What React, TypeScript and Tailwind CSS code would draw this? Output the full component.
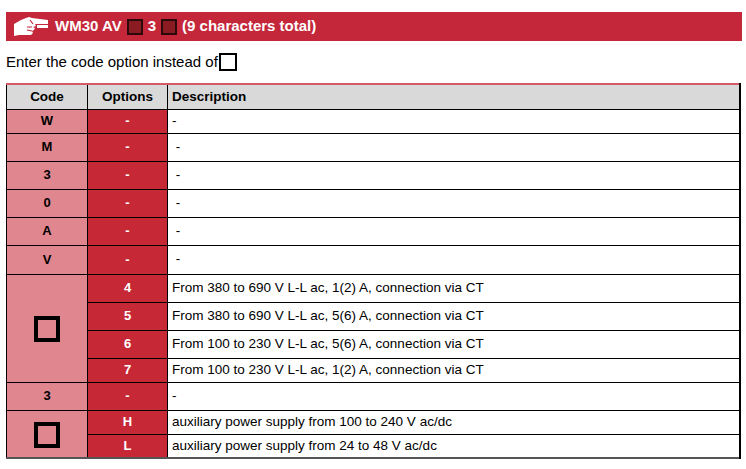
import React from 'react';

const font = { fontFamily: '"Liberation Sans", Arial, sans-serif' };

function Hand() {
  return (
    <svg width="38" height="22" viewBox="0 0 36 22" className="shrink-0">
      <path
        d="M1 8 L8 4 L13 2 L16 1 L19 2 L35 4 L35 8 L22 8 L23 10 L20 11 L22 12 L21 14 L19 15 L20 17 L18 19 L6 19 L1 20 Z"
        fill="#fff"
      />
      <path d="M17 4 L20 8 M19 11 L14 11 M19 15 L14 14" stroke="#c4263a" strokeWidth="1.2" fill="none" />
      <rect x="24" y="9" width="11" height="3" fill="#fff" />
    </svg>
  );
}

function SmallBox() {
  return <span className="inline-block w-[16px] h-[16px] bg-[#8a1b22] border-2 border-[#2a0a0a] align-middle" />;
}

function BigBox() {
  return <span className="inline-block w-[26px] h-[26px] border-[4px] border-black" />;
}

type Row = { code?: string; codeSpan?: number; box?: boolean; opt: string; desc: string; h: string };

const rows: Row[] = [
  { code: 'W', opt: '-', desc: '-', h: 'h-[24px]' },
  { code: 'M', opt: '-', desc: ' -', h: 'h-[28px]' },
  { code: '3', opt: '-', desc: ' -', h: 'h-[28px]' },
  { code: '0', opt: '-', desc: ' -', h: 'h-[28px]' },
  { code: 'A', opt: '-', desc: ' -', h: 'h-[28px]' },
  { code: 'V', opt: '-', desc: ' -', h: 'h-[29px]' },
  { box: true, codeSpan: 4, opt: '4', desc: 'From 380 to 690 V L-L ac, 1(2) A, connection via CT', h: 'h-[28px]' },
  { opt: '5', desc: 'From 380 to 690 V L-L ac, 5(6) A, connection via CT', h: 'h-[28px]' },
  { opt: '6', desc: 'From 100 to 230 V L-L ac, 5(6) A, connection via CT', h: 'h-[28px]' },
  { opt: '7', desc: 'From 100 to 230 V L-L ac, 1(2) A, connection via CT', h: 'h-[24px]' },
  { code: '3', opt: '-', desc: '-', h: 'h-[28px]' },
  { box: true, codeSpan: 2, opt: 'H', desc: 'auxiliary power supply from 100 to 240 V ac/dc', h: 'h-[24px]' },
  { opt: 'L', desc: 'auxiliary power supply from 24 to 48 V ac/dc', h: 'h-[24px]' },
];

export default function App() {
  return (
    <div className="w-[746px] h-[469px] bg-white pt-[12px] pl-[6px]" style={font}>
      <div className="w-[736px] h-[29px] bg-[#c4263a] flex items-center gap-[5px] pl-[6px] text-white font-bold text-[15px]">
        <Hand />
        <span>WM30 AV</span>
        <SmallBox />
        <span>3</span>
        <SmallBox />
        <span>(9 characters total)</span>
      </div>
      <div className="flex items-center mt-[10px] h-[22px] text-[15px] text-black">
        <span>Enter the code option instead of</span>
        <span className="inline-block w-[18px] h-[18px] border-2 border-black ml-[1px]" />
      </div>
      <table className="mt-[10px] w-[735px] border-collapse text-[13.5px] text-black border-b-2 border-b-[#555]">
        <thead>
          <tr className="h-[25px] bg-[#d9d9d9] font-bold">
            <th className="w-[81px] border border-black border-t-[#d55a68] border-t-2 text-center font-bold">Code</th>
            <th className="w-[80px] border border-black border-t-[#d55a68] border-t-2 text-center font-bold">Options</th>
            <th className="border border-black border-t-[#d55a68] border-t-2 border-r-2 text-left pl-[4px] font-bold">Description</th>
          </tr>
        </thead>
        <tbody>
          {rows.map((r, i) => (
            <tr key={i} className={r.h}>
              {r.code !== undefined && (
                <td className="bg-[#e0868f] border border-black text-center font-bold text-[13px]">{r.code}</td>
              )}
              {r.box && (
                <td rowSpan={r.codeSpan} className="bg-[#e0868f] border border-black text-center align-middle">
                  <div className="flex justify-center items-center pt-[2px]">
                    <BigBox />
                  </div>
                </td>
              )}
              <td className="bg-[#c62836] border border-black text-center font-bold text-white text-[13px]">{r.opt}</td>
              <td className="border border-black border-r-2 pl-[4px] whitespace-pre">{r.desc}</td>
            </tr>
          ))}
        </tbody>
      </table>
    </div>
  );
}
